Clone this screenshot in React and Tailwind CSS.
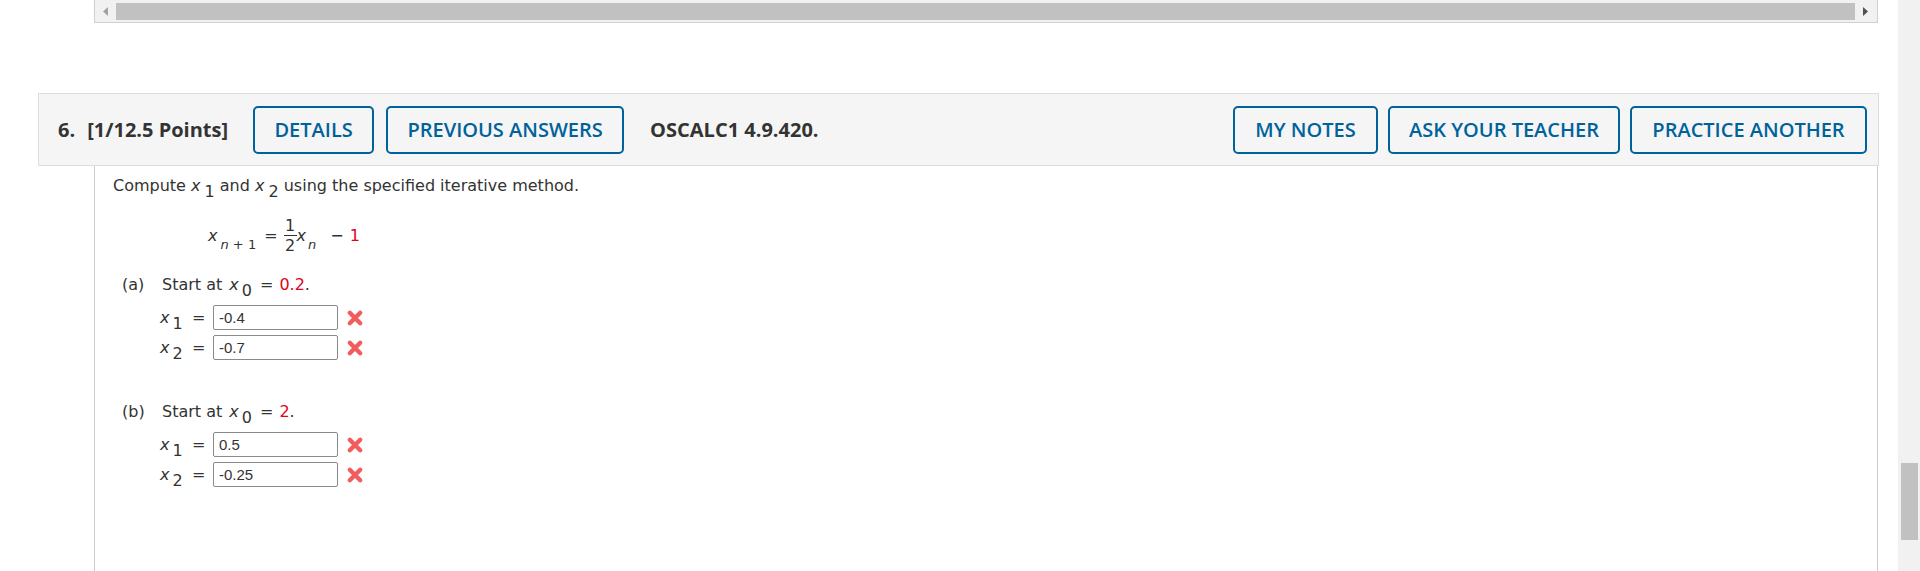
import React from 'react';

const verdana = { fontFamily: '"DejaVu Sans", Verdana, sans-serif' };

const RedX = () => (
    <svg width="18" height="18" viewBox="0 0 18 18" className="shrink-0">
        <path d="M3.8 3.8 L14.2 14.2 M14.2 3.8 L3.8 14.2" stroke="#f25c5c" strokeWidth="4.4" strokeLinecap="round" />
    </svg>
);

const Sub = ({ children, className = 'ml-[4px]' }) => (
    <span className={`not-italic align-[-6px] ${className}`}>{children}</span>
);

const Answer = ({ sub, value }) => (
    <div className="flex items-center h-[25px]">
        <span className="w-[32px] h-[20px] text-[#333] whitespace-nowrap">
            <span className="italic">x</span>
            <Sub className="ml-[3px]">{sub}</Sub>
        </span>
        <span className="w-[21px] text-[#333]">=</span>
        <div
            className="w-[125px] h-[25px] border border-[#8a8a8a] rounded-[2px] bg-white flex items-center px-[5px] text-[15px] text-[#333]"
            style={{ fontFamily: '"Liberation Sans", Arial, sans-serif' }}
        >
            {value}
        </div>
        <div className="ml-[8px]">
            <RedX />
        </div>
    </div>
);

const Part = ({ letter, start, answers, className = '' }) => (
    <div className={className}>
        <div className="h-[20px] text-[#333] whitespace-nowrap">
            <span className="inline-block ml-[9px] w-[40px]">({letter})</span>
            <span>Start at </span>
            <span className="italic ml-[2px]">x</span>
            <Sub className="ml-[3px]">0</Sub>
            <span className="ml-[8px]">=</span>
            <span className="ml-[6px] text-[#e3001b]">{start}</span>
            <span>.</span>
        </div>
        <div className="ml-[47px] mt-[10px] flex flex-col gap-[5px]">
            {answers.map((a) => (
                <Answer key={a.sub} sub={a.sub} value={a.value} />
            ))}
        </div>
    </div>
);

const HeaderButton = ({ children, width }) => (
    <div
        className={`h-[48px] ${width} shrink-0 border-2 border-[#00629b] rounded-[5px] flex items-center justify-center text-[20px] font-semibold text-[#00629b]`}
    >
        {children}
    </div>
);

export default function App() {
    return (
        <div className="w-full h-[571px] bg-white flex overflow-hidden" style={verdana}>
            <div className="w-[1898px] shrink-0 flex flex-col">
                {/* Tail of the previous question with its horizontal scrollbar */}
                <div className="ml-[94px] w-[1784px] h-[23px] border-l border-r border-b border-[#cfcfcf] bg-[#f1f1f1] flex items-center">
                    <div className="w-[21px] flex items-center justify-center">
                        <svg width="6" height="9" viewBox="0 0 6 9">
                            <path d="M5 0 L0 4.5 L5 9 Z" fill="#a3a3a3" />
                        </svg>
                    </div>
                    <div className="h-[17px] w-[1739px] bg-[#c1c1c1]" />
                    <div className="flex-1 flex items-center justify-center">
                        <svg width="6" height="9" viewBox="0 0 6 9">
                            <path d="M0 0 L5 4.5 L0 9 Z" fill="#505050" />
                        </svg>
                    </div>
                </div>

                {/* Question header */}
                <div
                    className="mt-[70px] ml-[38px] w-[1841px] h-[73px] border border-[#dddddd] bg-[#f5f5f5] flex items-center pl-[19px] pr-[11px]"
                    style={{ fontFamily: '"Open Sans", sans-serif' }}
                >
                    <span className="text-[20px] font-bold text-[#333]">6.</span>
                    <span className="ml-[12px] text-[20px] font-bold text-[#333]">[1/12.5 Points]</span>
                    <div className="ml-[25px] flex gap-[12px]">
                        <HeaderButton width="w-[121px]">DETAILS</HeaderButton>
                        <HeaderButton width="w-[238px]">PREVIOUS ANSWERS</HeaderButton>
                    </div>
                    <span className="ml-[26px] text-[20px] font-bold text-[#333]">OSCALC1 4.9.420.</span>
                    <div className="ml-auto flex gap-[10px]">
                        <HeaderButton width="w-[145px]">MY NOTES</HeaderButton>
                        <HeaderButton width="w-[232px]">ASK YOUR TEACHER</HeaderButton>
                        <HeaderButton width="w-[237px]">PRACTICE ANOTHER</HeaderButton>
                    </div>
                </div>

                {/* Question body */}
                <div className="ml-[94px] w-[1784px] flex-1 border-l border-r border-[#cccccc] pl-[18px] pt-[10px] text-[16px] leading-[20px]">
                    <div className="h-[20px] text-[#333] whitespace-nowrap">
                        <span>Compute </span>
                        <span className="italic">x</span>
                        <Sub>1</Sub>
                        <span> and </span>
                        <span className="italic">x</span>
                        <Sub>2</Sub>
                        <span> using the specified iterative method.</span>
                    </div>

                    {/* Iteration formula */}
                    <div className="ml-[95px] mt-[20px] flex items-center text-[#333] whitespace-nowrap">
                        <span className="h-[20px]">
                            <span className="italic">x</span>
                            <span className="text-[13px] align-[-8px] ml-[3px]">
                                <span className="italic">n</span> + 1
                            </span>
                        </span>
                        <span className="h-[20px] ml-[8px]">=</span>
                        <span className="ml-[6px] flex flex-col items-center leading-[19px]">
                            <span>1</span>
                            <span className="w-[13px] border-t border-[#333]" />
                            <span>2</span>
                        </span>
                        <span className="h-[20px]">
                            <span className="italic">x</span>
                            <span className="italic text-[13px] align-[-8px] ml-[2px]">n</span>
                        </span>
                        <span className="h-[20px] ml-[14px]">−</span>
                        <span className="h-[20px] ml-[6px] text-[#e3001b]">1</span>
                    </div>

                    <Part
                        letter="a"
                        start="0.2"
                        className="mt-[20px]"
                        answers={[
                            { sub: '1', value: '-0.4' },
                            { sub: '2', value: '-0.7' },
                        ]}
                    />
                    <Part
                        letter="b"
                        start="2"
                        className="mt-[42px]"
                        answers={[
                            { sub: '1', value: '0.5' },
                            { sub: '2', value: '-0.25' },
                        ]}
                    />
                </div>
            </div>

            {/* Page vertical scrollbar */}
            <div className="flex-1 bg-[#f1f1f1] pt-[463px] pl-[3px] pr-[2px]">
                <div className="h-[77px] bg-[#c1c1c1]" />
            </div>
        </div>
    );
}
